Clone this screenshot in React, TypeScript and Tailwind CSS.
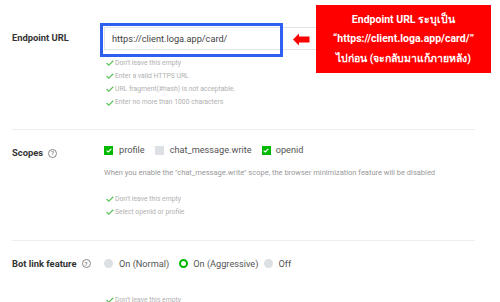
import React from 'react';

const rules = [
    "Don't leave this empty",
    'Enter a valid HTTPS URL',
    'URL fragment(#hash) is not acceptable.',
    'Enter no more than 1000 characters',
];

function Check() {
    return (
        <svg width="8" height="6" viewBox="0 0 8 6" className="shrink-0">
            <path d="M0.6 3 L2.8 5.1 L7.3 0.7" fill="none" stroke="#5cc15c" strokeWidth="1.2" />
        </svg>
    );
}

function Rule({ text }: { text: string }) {
    return (
        <li className="flex items-center gap-[1px] h-[13.3px] text-[6.8px] text-[#b0b0b0]">
            <Check />
            <span>{text}</span>
        </li>
    );
}

function Help() {
    return (
        <span className="inline-flex items-center justify-center w-[9px] h-[9px] rounded-full border border-[#888] text-[6px] leading-none text-[#888] ml-[5px]">
            ?
        </span>
    );
}

function Box({ on }: { on: boolean }) {
    return on ? (
        <span className="w-[9px] h-[9px] bg-[#00b900] flex items-center justify-center">
            <svg width="6" height="5" viewBox="0 0 6 5">
                <path d="M0.6 2.6 L2.3 4 L5.3 0.8" fill="none" stroke="#fff" strokeWidth="1.2" />
            </svg>
        </span>
    ) : (
        <span className="w-[9px] h-[9px] bg-[#dde0e5]" />
    );
}

function Radio({ on }: { on: boolean }) {
    return on ? (
        <span className="w-[9px] h-[9px] rounded-full border-[2.5px] border-[#00b900] bg-white" />
    ) : (
        <span className="w-[9px] h-[9px] rounded-full bg-[#dcdfe4]" />
    );
}

export default function App() {
    return (
        <div className="relative w-[500px] h-[302px] overflow-hidden bg-white font-['Roboto',sans-serif]">
            {/* Endpoint URL */}
            <section className="mx-[12px] w-[463px] pt-[27px] pb-[20px] border-b border-[#eeeeee]">
                <div className="flex">
                    <div className="w-[92px] h-[23px] flex items-center text-[9.4px] font-bold text-[#333]">Endpoint URL</div>
                    <div className="flex-1">
                        <div className="h-[23px] w-[360px] border border-[#e3e3e3] flex items-center pl-[7px] text-[9.2px] text-[#444]">
                            https://client.loga.app/card/
                        </div>
                        <ul className="mt-[6px] pl-[2px]">
                            {rules.map((r) => (
                                <Rule key={r} text={r} />
                            ))}
                        </ul>
                    </div>
                </div>
            </section>

            {/* Scopes */}
            <section className="mx-[12px] w-[463px] pt-[13px] pb-[21px] border-b border-[#eeeeee]">
                <div className="flex">
                    <div className="w-[92px] flex items-center mt-[3px] h-[14px] text-[9.4px] font-bold text-[#333]">
                        Scopes
                        <Help />
                    </div>
                    <div className="flex-1">
                        <div className="flex items-center h-[14px] text-[9.2px] text-[#555]">
                            <Box on />
                            <span className="ml-[6px]">profile</span>
                            <span className="ml-[10px]" />
                            <Box on={false} />
                            <span className="ml-[6px]">chat_message.write</span>
                            <span className="ml-[10px]" />
                            <Box on />
                            <span className="ml-[5px]">openid</span>
                        </div>
                        <p className="mt-[10px] h-[12px] leading-[12px] text-[7.5px] text-[#999]">
                            When you enable the "chat_message.write" scope, the browser minimization feature will be disabled
                        </p>
                        <ul className="mt-[13px] pl-[2px]">
                            <Rule text="Don't leave this empty" />
                            <Rule text="Select openid or profile" />
                        </ul>
                    </div>
                </div>
            </section>

            {/* Bot link feature */}
            <section className="mx-[12px] w-[463px] pt-[16px]">
                <div className="flex">
                    <div className="w-[92px] flex items-center h-[14px] text-[9.4px] font-bold text-[#333]">
                        Bot link feature
                        <Help />
                    </div>
                    <div className="flex-1">
                        <div className="flex items-center h-[14px] text-[9.2px] text-[#555]">
                            <Radio on={false} />
                            <span className="ml-[6px]">On (Normal)</span>
                            <span className="ml-[10px]" />
                            <Radio on />
                            <span className="ml-[5px]">On (Aggressive)</span>
                            <span className="ml-[6px]" />
                            <Radio on={false} />
                            <span className="ml-[5px]">Off</span>
                        </div>
                        <ul className="mt-[23px] pl-[2px]">
                            <Rule text="Don't leave this empty" />
                        </ul>
                    </div>
                </div>
            </section>

            {/* annotation overlays */}
            <div className="absolute left-[100px] top-[23px] w-[183px] h-[34px] border-[3px] border-[#2f5ff0]" />
            <svg className="absolute left-[293px] top-[33px]" width="17" height="13" viewBox="0 0 17 13">
                <path d="M0 6.5 L6 0.5 L6 3.5 L16.5 3.5 L16.5 9.5 L6 9.5 L6 12.5 Z" fill="#ff0000" />
            </svg>
            <div className="absolute left-[316px] top-[5px] w-[175px] h-[68px] bg-[#ff0000] flex flex-col items-center justify-center text-white font-bold text-[10.5px] leading-[19.5px] font-['Roboto','Noto_Sans',sans-serif]">
                <div>Endpoint URL ระบุเป็น</div>
                <div>“https://client.loga.app/card/”</div>
                <div>ไปก่อน (จะกลับมาแก้ภายหลัง)</div>
            </div>
        </div>
    );
}
